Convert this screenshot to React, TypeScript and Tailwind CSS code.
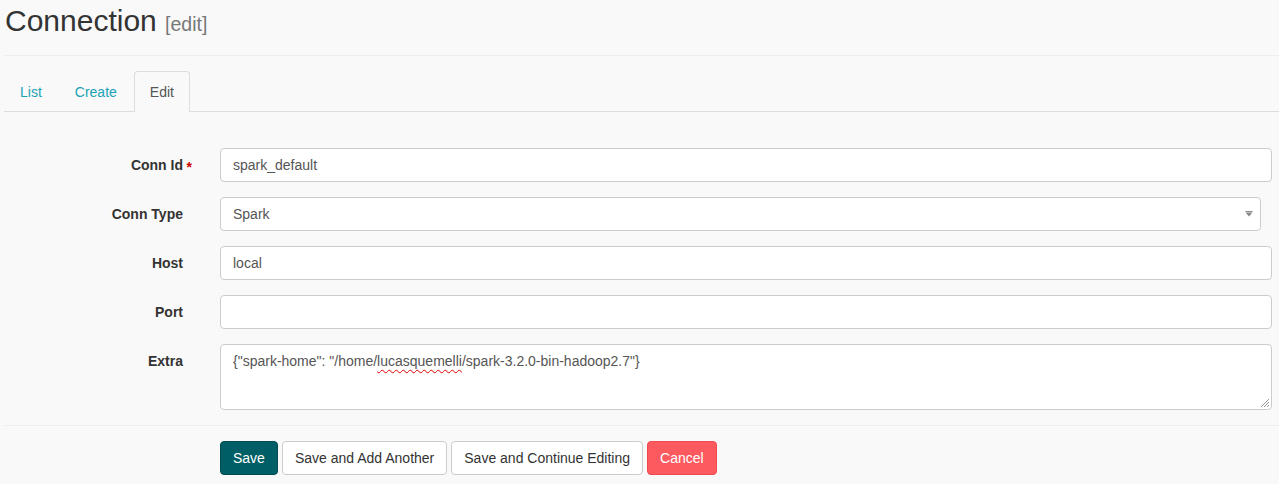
import React from 'react';

const font = { fontFamily: '"Liberation Sans", Arial, Helvetica, sans-serif' };

type Field = { label: string; value: string; required?: boolean; kind?: 'input' | 'select' };

const fields: Field[] = [
  { label: 'Conn Id', value: 'spark_default', required: true },
  { label: 'Conn Type', value: 'Spark', kind: 'select' },
  { label: 'Host', value: 'local' },
  { label: 'Port', value: '' },
];

function Label({ text, required }: { text: string; required?: boolean }) {
  return (
    <div className="w-[179px] shrink-0 pt-[7px] text-right text-[14px] font-bold leading-5 text-[#333]">
      <span className="relative">
        {text}
        {required && <span className="absolute -right-[9px] top-0 text-[#c00]">*</span>}
      </span>
    </div>
  );
}

export default function App() {
  const tabs = ['List', 'Create', 'Edit'];

  return (
    <div className="min-h-[484px] bg-[#f9f9f9] pl-[4px]" style={font}>
      {/* page header */}
      <div className="border-b border-[#eee] pb-[14px] pt-[4px]">
        <h1 className="pl-px text-[30px] font-normal leading-[33px] text-[#333]">
          Connection <span className="text-[19.5px] text-[#777]">[edit]</span>
        </h1>
      </div>

      {/* tabs */}
      <ul className="mt-[15px] flex border-b border-[#ddd]">
        {tabs.map((t) => {
          const active = t === 'Edit';
          return (
            <li key={t} className="-mb-px mr-px">
              <a
                className={`block h-[41px] rounded-t-[4px] border-x border-t px-[15px] py-[10px] text-[14px] leading-5 ${
                  active ? 'border-[#ddd] bg-[#f9f9f9] text-[#555]' : 'border-transparent text-[#1ca2b6]'
                }`}
              >
                {t}
              </a>
            </li>
          );
        })}
      </ul>

      {/* form */}
      <div className="mt-[36px] flex flex-col gap-[15px]">
        {fields.map((f) => (
          <div key={f.label} className="flex">
            <Label text={f.label} required={f.required} />
            {f.kind === 'select' ? (
              <div className="ml-[37px] mr-[18px] flex h-[34px] flex-1 items-center justify-between rounded-[4px] border border-[#ccc] bg-white pl-[12px] pr-[6px] text-[14px] text-[#555]">
                <span>{f.value}</span>
                <svg width="8" height="6" viewBox="0 0 8 6" className="mr-[1px]">
                  <rect x="0.5" y="0" width="7" height="1" fill="#888" />
                  <path d="M0.5 1.5 H7.5 L4 5.5 Z" fill="#888" />
                </svg>
              </div>
            ) : (
              <div className="ml-[37px] mr-[7px] h-[34px] flex-1 rounded-[4px] border border-[#ccc] bg-white px-[12px] py-[6px] text-[14px] leading-5 text-[#555]">
                {f.value}
              </div>
            )}
          </div>
        ))}

        <div className="flex">
          <Label text="Extra" />
          <div className="relative ml-[37px] mr-[7px] h-[66px] flex-1 rounded-[4px] border border-[#ccc] bg-white px-[12px] py-[6px] text-[14px] leading-5 text-[#555]">
            {'{"spark-home": "/home/'}
            <span className="underline decoration-[#d00] decoration-wavy decoration-1 underline-offset-[3px]">
              lucasquemelli
            </span>
            {'/spark-3.2.0-bin-hadoop2.7"}'}
            <svg width="10" height="10" viewBox="0 0 10 10" className="absolute bottom-[1px] right-[1px]">
              <path d="M9 1 L1 9 M9 4 L4 9 M9 7 L7 9" stroke="#999" strokeWidth="1" />
            </svg>
          </div>
        </div>
      </div>

      {/* actions */}
      <div className="mt-[15px] border-t border-[#eee] pt-[15px]">
        <div className="ml-[216px] flex gap-[4px] text-[14px] leading-5">
          <button className="h-[34px] rounded-[4px] border border-[#004c52] bg-[#005f66] px-[12px] text-white">
            Save
          </button>
          <button className="h-[34px] rounded-[4px] border border-[#ccc] bg-white px-[12px] text-[#333]">
            Save and Add Another
          </button>
          <button className="h-[34px] rounded-[4px] border border-[#ccc] bg-white px-[12px] text-[#333]">
            Save and Continue Editing
          </button>
          <button className="h-[34px] rounded-[4px] border border-[#f04a50] bg-[#fd5a5f] px-[12px] text-white">
            Cancel
          </button>
        </div>
      </div>
    </div>
  );
}
